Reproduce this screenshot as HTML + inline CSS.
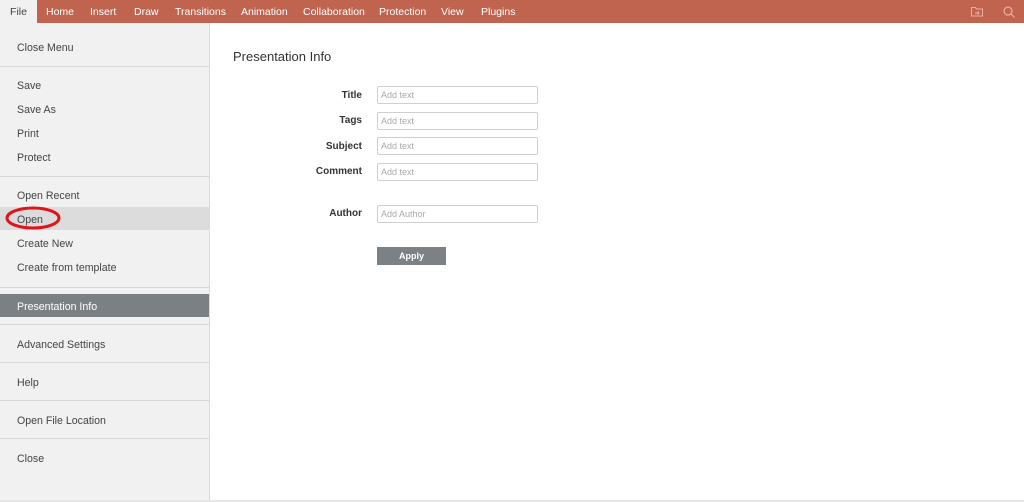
<!DOCTYPE html>
<html><head><meta charset="utf-8"><style>
*{margin:0;padding:0;box-sizing:border-box}
body{width:1024px;height:502px;overflow:hidden;background:#fff;font-family:"Liberation Sans",Arial,sans-serif;position:relative}
.top{position:absolute;left:0;top:0;width:1024px;height:23px;background:#c0644f}
.tab{position:absolute;top:0;height:23px;line-height:25px;font-size:10.5px;color:#fff}
.file{left:0;width:37px;background:#f1f1f1;color:#444;text-align:center}
.side{position:absolute;left:0;top:23px;width:210px;height:477px;background:#f1f1f1;border-right:1px solid #dcdcdc}
.it{position:absolute;left:17px;font-size:10.6px;color:#444;margin-top:2px}
.sep{position:absolute;left:0;width:209px;height:1px;background:#d8d8d8}
.hl{position:absolute;left:0;width:209px}
.lab{position:absolute;right:662px;font-size:10px;font-weight:bold;color:#333;margin-top:1px}
.inp{position:absolute;left:377px;width:161px;height:18px;border:1px solid #cfcfcf;border-radius:2px;font-size:9px;color:#aaa;padding-left:3px;line-height:16px}
</style></head><body>
<div class="top"></div>
<div class="tab file">File</div>
<div class="tab" style="left:46px">Home</div>
<div class="tab" style="left:90px">Insert</div>
<div class="tab" style="left:134px">Draw</div>
<div class="tab" style="left:175px">Transitions</div>
<div class="tab" style="left:241px">Animation</div>
<div class="tab" style="left:303px">Collaboration</div>
<div class="tab" style="left:379px">Protection</div>
<div class="tab" style="left:441px">View</div>
<div class="tab" style="left:481px">Plugins</div>
<svg style="position:absolute;left:970px;top:5px" width="14" height="13" viewBox="0 0 14 13" fill="none" stroke="#e8b0a3" stroke-width="1"><path d="M1.5 2.5h4l1 1.5h6v7h-11z"/><path d="M5 8h4M7.5 6.5l1.5 1.5-1.5 1.5"/></svg>
<svg style="position:absolute;left:1002px;top:5px" width="14" height="14" viewBox="0 0 14 14" fill="none" stroke="#e8b0a3" stroke-width="1.2"><circle cx="6" cy="6" r="4"/><path d="M9 9l3.5 3.5"/></svg>
<div class="side">
<div class="it" style="top:17px">Close Menu</div>
<div class="sep" style="top:43px"></div>
<div class="it" style="top:55px">Save</div>
<div class="it" style="top:79px">Save As</div>
<div class="it" style="top:103px">Print</div>
<div class="it" style="top:127px">Protect</div>
<div class="sep" style="top:153px"></div>
<div class="it" style="top:165px">Open Recent</div>
<div class="hl" style="top:184px;height:23px;background:#dcdcdc"></div>
<div class="it" style="top:189px">Open</div>
<div class="it" style="top:213px">Create New</div>
<div class="it" style="top:237px">Create from template</div>
<div class="sep" style="top:264px"></div>
<div class="hl" style="top:271px;height:23px;background:#7b8085"></div>
<div class="it" style="top:276px;color:#fff">Presentation Info</div>
<div class="sep" style="top:301px"></div>
<div class="it" style="top:314px">Advanced Settings</div>
<div class="sep" style="top:339px"></div>
<div class="it" style="top:352px">Help</div>
<div class="sep" style="top:377px"></div>
<div class="it" style="top:390px">Open File Location</div>
<div class="sep" style="top:415px"></div>
<div class="it" style="top:428px">Close</div>
</div>
<svg style="position:absolute;left:5px;top:205px" width="58" height="26"><ellipse cx="28" cy="13" rx="26" ry="10" fill="none" stroke="#e0151b" stroke-width="3"/></svg>
<div style="position:absolute;left:233px;top:49px;font-size:13px;color:#333">Presentation Info</div>
<div class="lab" style="top:89px">Title</div>
<div class="inp" style="top:86px">Add text</div>
<div class="lab" style="top:114px">Tags</div>
<div class="inp" style="top:112px">Add text</div>
<div class="lab" style="top:140px">Subject</div>
<div class="inp" style="top:137px">Add text</div>
<div class="lab" style="top:165px">Comment</div>
<div class="inp" style="top:163px">Add text</div>
<div class="lab" style="top:207px">Author</div>
<div class="inp" style="top:205px">Add Author</div>
<div style="position:absolute;left:377px;top:247px;width:69px;height:18px;background:#7c8185;color:#fff;font-size:9px;font-weight:bold;text-align:center;line-height:18px">Apply</div>
<div style="position:absolute;left:0;top:500px;width:1024px;height:2px;background:#e6e6e6"></div>
</body></html>
